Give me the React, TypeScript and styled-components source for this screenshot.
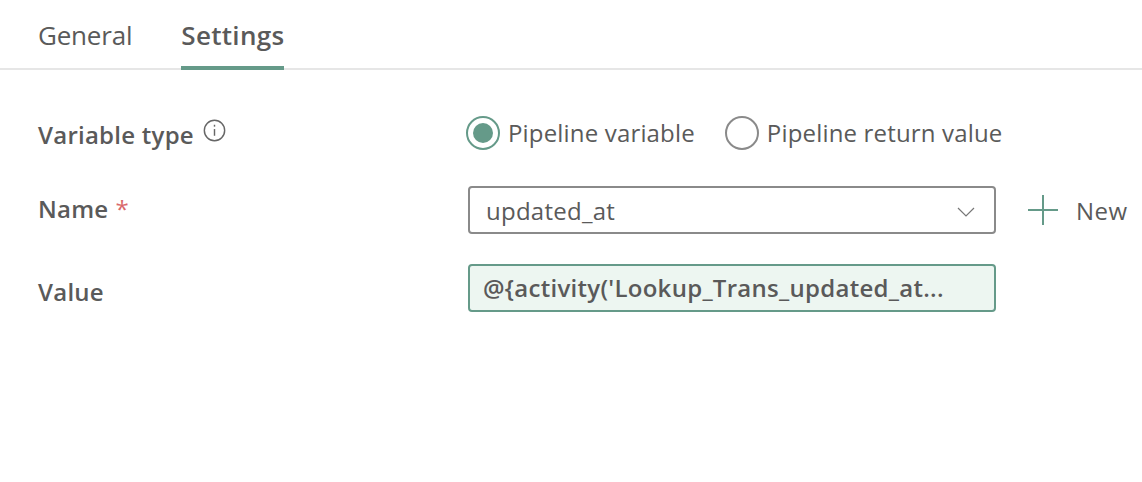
import { FC } from 'react';
import styled, { createGlobalStyle } from 'styled-components';

const GlobalStyle = createGlobalStyle`
	html, body {
		margin: 0;
		padding: 0;
		background: #ffffff;
		overflow: hidden;
	}
	body {
		font-family: 'Open Sans', 'Noto Sans', sans-serif;
		color: #5a5a5a;
	}
`;

const App: FC = () => (
	<Page>
		<GlobalStyle />
		<TabBar>
			<Tab>General</Tab>
			<Tab $active>Settings</Tab>
		</TabBar>
		<Form>
			<TypeRow>
				<TypeLabel>
					Variable type
					<InfoIcon viewBox="0 0 24 24">
						<circle cx="12" cy="12" r="10.6" />
						<line x1="12" y1="10.5" x2="12" y2="17.5" />
						<line x1="12" y1="6" x2="12" y2="8" />
					</InfoIcon>
				</TypeLabel>
				<RadioGroup>
					<RadioOption>
						<Radio $checked />
						<span>Pipeline variable</span>
					</RadioOption>
					<RadioOption>
						<Radio />
						<span>Pipeline return value</span>
					</RadioOption>
				</RadioGroup>
			</TypeRow>
			<NameRow>
				<NameLabel>
					Name <Required>*</Required>
				</NameLabel>
				<Select>
					<span>updated_at</span>
					<Chevron viewBox="0 0 18 10">
						<polyline points="1,1 9,9 17,1" />
					</Chevron>
				</Select>
				<NewButton>
					<PlusIcon viewBox="0 0 32 32">
						<line x1="0" y1="16" x2="32" y2="16" />
						<line x1="16" y1="0" x2="16" y2="32" />
					</PlusIcon>
					New
				</NewButton>
			</NameRow>
			<ValueRow>
				<ValueLabel>Value</ValueLabel>
				<ValueField>@&#123;activity('Lookup_Trans_updated_at...</ValueField>
			</ValueRow>
		</Form>
	</Page>
);

const Page = styled.div`
	width: 1142px;
	height: 482px;
	background: #ffffff;
`;

const TabBar = styled.div`
	display: flex;
	gap: 49px;
	height: 68px;
	padding-left: 38px;
	border-bottom: 2px solid #e6e6e6;
`;

const Tab = styled.div<{ $active?: boolean }>`
	height: 70px;
	box-sizing: border-box;
	padding-top: 17px;
	font-size: 26px;
	line-height: 36px;
	letter-spacing: ${(props) => (props.$active ? '0.3px' : '-0.2px')};
	font-weight: ${(props) => (props.$active ? 600 : 400)};
	border-bottom: 4px solid ${(props) => (props.$active ? '#659a89' : 'transparent')};
`;

const Form = styled.div`
	display: flex;
	flex-direction: column;
`;

const Row = styled.div`
	display: grid;
	grid-template-columns: 430px 528px auto;
	align-items: center;
	padding-left: 38px;
`;

const TypeRow = styled(Row)`
	margin-top: 46px;
	height: 34px;
	align-items: start;
`;

const NameRow = styled(Row)`
	margin-top: 36px;
	height: 48px;
`;

const ValueRow = styled(Row)`
	margin-top: 30px;
	height: 48px;
`;

const Label = styled.div`
	display: flex;
	align-items: baseline;
	gap: 7px;
	font-size: 24px;
	font-weight: 600;
	letter-spacing: 0.25px;
	line-height: 32px;
`;

const TypeLabel = styled(Label)`
	margin-top: 3px;
`;

const NameLabel = styled(Label)`
	margin-bottom: 3px;
`;

const ValueLabel = styled(Label)`
	margin-top: 8px;
`;

const InfoIcon = styled.svg`
	width: 23px;
	height: 23px;
	margin-left: 2px;
	align-self: flex-start;
	margin-top: 0;
	fill: none;
	stroke: #666666;
	stroke-width: 1.5;
`;

const Required = styled.span`
	color: #d9696b;
	font-weight: 400;
`;

const RadioGroup = styled.div`
	display: flex;
	align-items: center;
	gap: 30px;
	margin-left: -2px;
	grid-column: 2 / 4;
`;

const RadioOption = styled.div`
	display: flex;
	align-items: center;
	gap: 8px;
	font-size: 24px;
	line-height: 34px;
	letter-spacing: 0.17px;
`;

const Radio = styled.span<{ $checked?: boolean }>`
	display: flex;
	align-items: center;
	justify-content: center;
	width: 34px;
	height: 34px;
	box-sizing: border-box;
	border-radius: 50%;
	border: 2px solid ${(props) => (props.$checked ? '#659a89' : '#8a8a8a')};

	&::after {
		content: '';
		display: ${(props) => (props.$checked ? 'block' : 'none')};
		width: 20px;
		height: 20px;
		border-radius: 50%;
		background: #659a89;
	}
`;

const Select = styled.div`
	display: flex;
	align-items: center;
	justify-content: space-between;
	height: 48px;
	box-sizing: border-box;
	padding: 0 19px 0 16px;
	border: 2px solid #8a8a8a;
	border-radius: 4px;
	font-size: 24px;
	letter-spacing: 0.25px;
`;

const Chevron = styled.svg`
	width: 18px;
	height: 10px;
	margin-top: 4px;
	fill: none;
	stroke: #777777;
	stroke-width: 1.2;
`;

const NewButton = styled.div`
	display: flex;
	align-items: center;
	gap: 18px;
	margin-left: 32px;
	font-size: 24px;
	letter-spacing: 0.5px;
`;

const PlusIcon = styled.svg`
	width: 30px;
	height: 30px;
	fill: none;
	stroke: #659a89;
	stroke-width: 2.2;
`;

const ValueField = styled.div`
	height: 48px;
	box-sizing: border-box;
	padding: 0 13px;
	line-height: 44px;
	border: 2px solid #659a89;
	border-radius: 4px;
	background: #edf6f1;
	font-size: 24px;
	font-weight: 600;
	letter-spacing: 0.28px;
	white-space: nowrap;
	overflow: hidden;
`;

export default App;
